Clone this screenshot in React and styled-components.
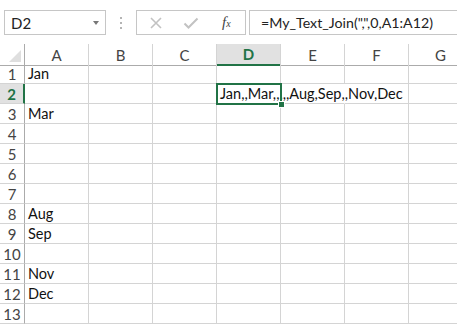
import React from 'react'
import styled, { createGlobalStyle } from 'styled-components'

const GlobalStyle = createGlobalStyle`
  html, body {
    margin: 0;
    padding: 0;
    background: #fff;
    overflow: hidden;
  }
  body {
    font-family: Lato, "Liberation Sans", sans-serif;
  }
`

const green = '#217346'
const gridLine = '#d4d4d4'
const headLine = '#ababab'

const Page = styled.div`
  width: 457px;
  height: 324px;
  overflow: hidden;
  background: #fff;
`

const Toolbar = styled.div`
  display: flex;
  align-items: center;
  height: 25px;
  padding: 10px 0 9px 4px;
`

const NameBox = styled.div`
  box-sizing: border-box;
  width: 102px;
  height: 25px;
  border: 1px solid #c6c6c6;
  display: flex;
  align-items: center;
  justify-content: space-between;
  padding: 0 6px 0 6px;
  font-size: 15px;
  color: #222;
`

const Caret = styled.span`
  width: 0;
  height: 0;
  border-left: 3.5px solid transparent;
  border-right: 3.5px solid transparent;
  border-top: 4px solid #777;
`

const Grip = styled.div`
  width: 30px;
  display: flex;
  flex-direction: column;
  align-items: center;
  gap: 3px;

  span {
    width: 2px;
    height: 2px;
    background: #b4b4b4;
  }
`

const FxButtons = styled.div`
  box-sizing: border-box;
  width: 110px;
  height: 25px;
  border: 1px solid #c6c6c6;
  display: flex;
  align-items: center;
  padding-left: 12px;
  gap: 20px;
`

const Fx = styled.span`
  font-family: "Liberation Serif", serif;
  font-style: italic;
  font-size: 15px;
  color: #444;
  margin-left: 3px;

  sub {
    font-size: 10px;
    vertical-align: baseline;
  }
`

const FormulaBar = styled.div`
  box-sizing: border-box;
  flex: 1;
  height: 25px;
  margin-left: 3px;
  border: 1px solid #c6c6c6;
  border-right: none;
  display: flex;
  align-items: center;
  padding-left: 11px;
  font-size: 14.2px;
  color: #222;
  white-space: nowrap;
`

const Sheet = styled.div`
  display: grid;
  grid-template-columns: 25px repeat(7, 64px);
  grid-auto-rows: 20px;
  width: 473px;
`

const Corner = styled.div`
  height: 21px;
  border-right: 1px solid ${headLine};
  border-bottom: 1px solid ${headLine};
  position: relative;

  &::after {
    content: '';
    position: absolute;
    right: 3px;
    bottom: 3px;
    width: 0;
    height: 0;
    border-left: 12px solid transparent;
    border-bottom: 12px solid #dfdfdf;
  }
`

const ColHead = styled.div`
  box-sizing: border-box;
  height: 22px;
  display: flex;
  align-items: flex-end;
  justify-content: center;
  padding-bottom: 1px;
  font-size: 15px;
  border-right: 1px solid ${gridLine};
  border-bottom: ${({ $active }) => ($active ? `2px solid ${green}` : `1px solid ${headLine}`)};
  background: ${({ $active }) => ($active ? '#e1e1e1' : '#fff')};
  color: ${({ $active }) => ($active ? green : '#444')};
  font-weight: ${({ $active }) => ($active ? 700 : 400)};
`

const RowHead = styled.div`
  box-sizing: border-box;
  display: flex;
  align-items: flex-end;
  justify-content: center;
  font-size: 15px;
  line-height: 18px;
  border-bottom: 1px solid ${gridLine};
  border-right: ${({ $active }) => ($active ? `2px solid ${green}` : `1px solid ${headLine}`)};
  background: ${({ $active }) => ($active ? '#e1e1e1' : '#fff')};
  color: ${({ $active }) => ($active ? green : '#444')};
  font-weight: ${({ $active }) => ($active ? 700 : 400)};
`

const Cell = styled.div`
  box-sizing: border-box;
  position: relative;
  display: flex;
  align-items: flex-end;
  padding-left: 3px;
  font-size: 14.5px;
  line-height: 18px;
  color: #111;
  white-space: nowrap;
  border-bottom: 1px solid ${gridLine};
  border-right: ${({ $noRight }) => ($noRight ? '1px solid transparent' : `1px solid ${gridLine}`)};
  z-index: ${({ $selected }) => ($selected ? 2 : 1)};

  ${({ $selected }) =>
    $selected &&
    `
    &::before {
      content: '';
      position: absolute;
      left: -1px;
      top: -1px;
      width: 66px;
      height: 22px;
      box-sizing: border-box;
      border: 2px solid ${green};
    }
    &::after {
      content: '';
      position: absolute;
      left: 61px;
      top: 17px;
      width: 5px;
      height: 5px;
      background: ${green};
      border: 1px solid #fff;
    }
  `}
`

const columns = ['A', 'B', 'C', 'D', 'E', 'F', 'G']
const colA = { 1: 'Jan', 3: 'Mar', 8: 'Aug', 9: 'Sep', 11: 'Nov', 12: 'Dec' }
const joined = 'Jan,,Mar,,,,,Aug,Sep,,Nov,Dec'

const CancelIcon = () => (
  <svg width="14" height="14" viewBox="0 0 14 14">
    <path d="M2 2 L12 12 M12 2 L2 12" stroke="#c2c2c2" strokeWidth="1.6" fill="none" />
  </svg>
)

const CheckIcon = () => (
  <svg width="16" height="14" viewBox="0 0 16 14">
    <path d="M1.5 7.5 L5.5 11.5 L14.5 2.5" stroke="#c2c2c2" strokeWidth="2" fill="none" />
  </svg>
)

const App = () => {
  const rows = Array.from({ length: 13 }, (_, i) => i + 1)

  return (
    <>
      <GlobalStyle />
      <Page>
        <Toolbar>
          <NameBox>
            D2
            <Caret />
          </NameBox>
          <Grip>
            <span />
            <span />
            <span />
          </Grip>
          <FxButtons>
            <CancelIcon />
            <CheckIcon />
            <Fx>f<sub>x</sub></Fx>
          </FxButtons>
          <FormulaBar>=My_Text_Join(",",0,A1:A12)</FormulaBar>
        </Toolbar>

        <Sheet>
          <Corner />
          {columns.map((c) => (
            <ColHead key={c} $active={c === 'D'}>{c}</ColHead>
          ))}
          {rows.map((r) => (
            <React.Fragment key={r}>
              <RowHead $active={r === 2}>{r}</RowHead>
              {columns.map((c) => {
                const selected = r === 2 && c === 'D'
                const noRight = r === 2 && (c === 'D' || c === 'E')
                let text = ''
                if (c === 'A' && colA[r]) text = colA[r]
                if (selected) text = joined
                return (
                  <Cell key={c} $selected={selected} $noRight={noRight}>
                    {text}
                  </Cell>
                )
              })}
            </React.Fragment>
          ))}
        </Sheet>
      </Page>
    </>
  )
}

export default App
